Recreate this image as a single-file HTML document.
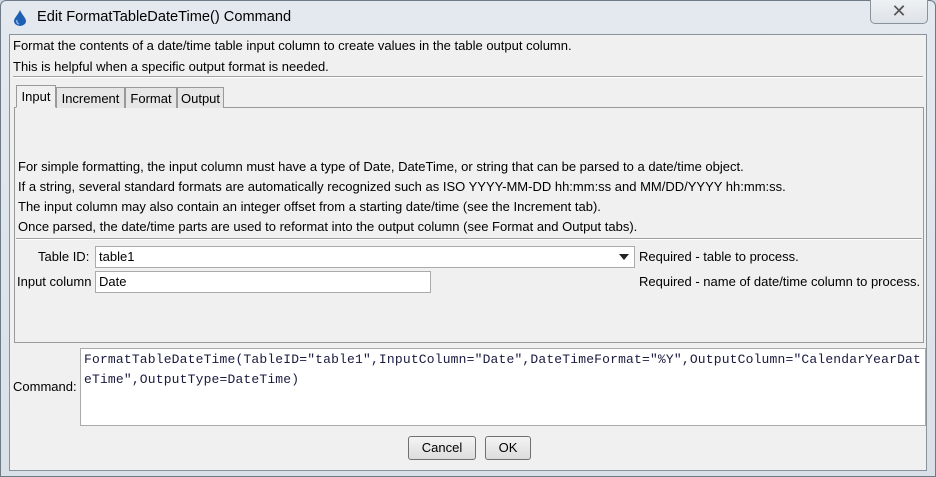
<!DOCTYPE html>
<html><head><style>
*{box-sizing:border-box;margin:0;padding:0}
body{width:936px;height:477px;overflow:hidden;background:#cfd8e2;font-family:"Liberation Sans",Arial,sans-serif;font-size:13px;color:#000;position:relative}
.frame{position:absolute;left:0;top:0;width:936px;height:477px;background:linear-gradient(#e4e9ef,#d9e0e8);border:1px solid #6e7a86;border-radius:6px 6px 0 0}
.title{position:absolute;left:37px;top:9px;font-size:14.6px;color:#000}
.close{position:absolute;left:870px;top:0;width:58px;height:24px;border:1px solid #8a929b;border-top:none;border-radius:0 0 5px 5px;background:linear-gradient(#eef1f4,#dde2e7);text-align:center;font-size:18px;line-height:22px;color:#555}
.content{position:absolute;left:9px;top:34px;width:918px;height:437px;background:#f0f0f0;border:1px solid #8a929b}
.a{position:absolute;white-space:nowrap}
.sep{position:absolute;height:2px;border-top:1px solid #a0a0a0;border-bottom:1px solid #fff}
.tab{position:absolute;top:87px;height:21px;border:1px solid #999;border-bottom:none;background:#e6e6e6;padding:3px 0 0 0;text-align:center;font-size:13px}
.panel{position:absolute;left:14px;top:107px;width:910px;height:236px;border:1px solid #999;background:#f0f0f0}
.field{position:absolute;background:#fff;border:1px solid #aaa;padding:3px 3px;font-size:13px}
.btn{position:absolute;top:436px;height:24px;border:1px solid #707070;border-radius:3px;background:linear-gradient(#f4f4f4,#dcdcdc);text-align:center;line-height:22px;font-size:13px}
.mono{font-family:"Liberation Mono","Courier New",monospace;font-size:13px;letter-spacing:0.17px;color:#1a1a40;line-height:20px;white-space:nowrap;overflow:hidden}
</style></head><body>
<div class="frame"></div>
<svg style="position:absolute;left:14px;top:10px" width="12" height="16" viewBox="0 0 12 16"><path d="M6 0 C4 5 0 8 0 11 A6 5 0 0 0 12 11 C12 8 8 5 6 0Z" fill="#1d5fb3"/><path d="M3 10 A3 3 0 0 0 5 14" stroke="#8ab4ea" stroke-width="1.5" fill="none"/></svg>
<div class="title">Edit FormatTableDateTime() Command</div>
<div class="close">✕</div>
<div class="content"></div>
<div class="a" style="left:13px;top:38px">Format the contents of a date/time table input column to create values in the table output column.</div>
<div class="a" style="left:13px;top:59px">This is helpful when a specific output format is needed.</div>
<div class="sep" style="left:13px;top:76px;width:910px"></div>
<div class="panel"></div>
<div class="tab" style="left:16px;width:40px;top:85px;height:23px;background:#f0f0f0;z-index:2;border-bottom:1px solid #f0f0f0">Input</div>
<div class="tab" style="left:56px;width:69px">Increment</div>
<div class="tab" style="left:125px;width:52px">Format</div>
<div class="tab" style="left:177px;width:47px">Output</div>
<div class="a" style="left:18px;top:159px">For simple formatting, the input column must have a type of Date, DateTime, or string that can be parsed to a date/time object.</div>
<div class="a" style="left:18px;top:179px">If a string, several standard formats are automatically recognized such as ISO YYYY-MM-DD hh:mm:ss and MM/DD/YYYY hh:mm:ss.</div>
<div class="a" style="left:18px;top:199px">The input column may also contain an integer offset from a starting date/time (see the Increment tab).</div>
<div class="a" style="left:18px;top:219px">Once parsed, the date/time parts are used to reformat into the output column (see Format and Output tabs).</div>
<div class="sep" style="left:16px;top:238px;width:906px"></div>
<div class="a" style="left:38px;top:249px">Table ID:</div>
<div class="field" style="left:95px;top:246px;width:540px;height:22px;padding-top:2px">table1<span style="position:absolute;right:5px;top:7px;width:0;height:0;border-left:5px solid transparent;border-right:5px solid transparent;border-top:6px solid #222"></span></div>
<div class="a" style="left:639px;top:249px">Required - table to process.</div>
<div class="a" style="left:17px;top:274px">Input column</div>
<div class="field" style="left:95px;top:271px;width:336px;height:22px;padding-top:2px">Date</div>
<div class="a" style="left:639px;top:274px">Required - name of date/time column to process.</div>
<div class="a" style="left:13px;top:379px">Command:</div>
<div class="field mono" style="left:80px;top:348px;width:846px;height:78px;padding:1px 3px">FormatTableDateTime(TableID="table1",InputColumn="Date",DateTimeFormat="%Y",OutputColumn="CalendarYearDat<br>eTime",OutputType=DateTime)</div>
<div class="btn" style="left:408px;width:68px">Cancel</div>
<div class="btn" style="left:485px;width:46px">OK</div>
</body></html>
